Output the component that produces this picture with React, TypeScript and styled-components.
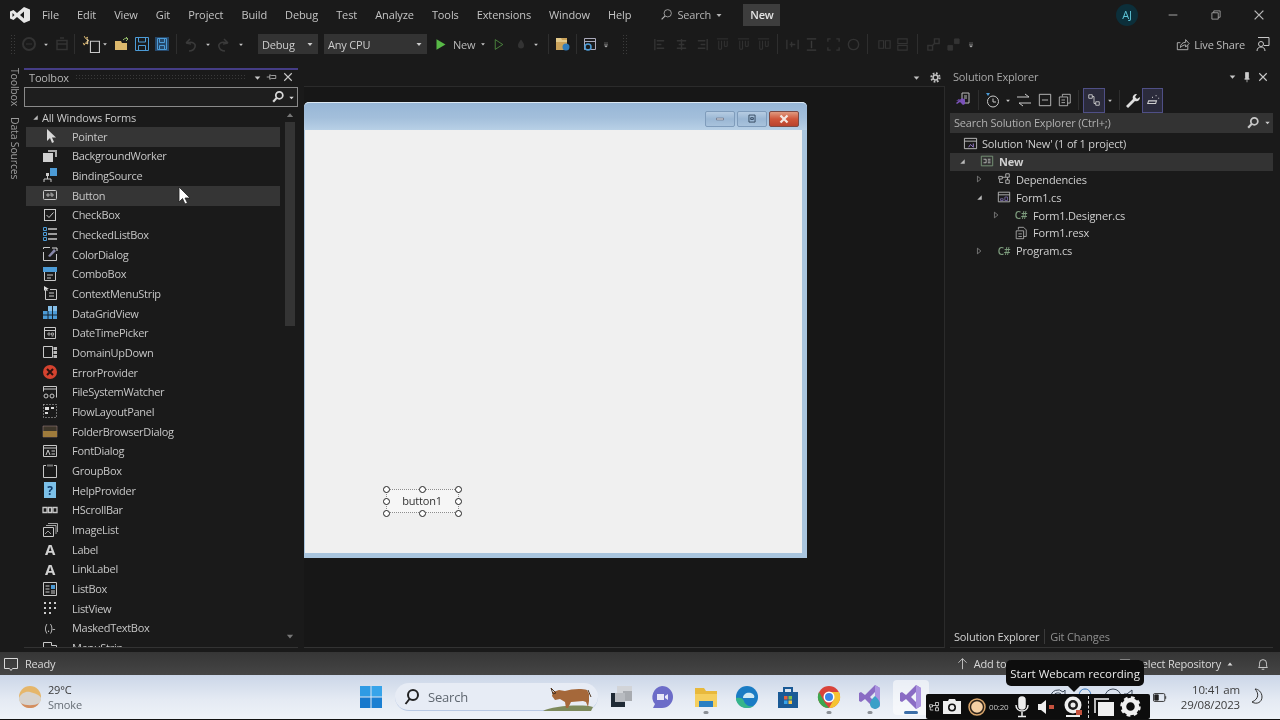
import React from 'react'
import styled, { createGlobalStyle } from 'styled-components'

const GlobalStyle = createGlobalStyle`
  html, body {
    margin: 0;
    padding: 0;
    width: 1280px;
    height: 720px;
    overflow: hidden;
    background: #1a1a1a;
  }
  * {
    box-sizing: border-box;
  }
`

const Page = styled.div`
  position: relative;
  width: 1280px;
  height: 720px;
  overflow: hidden;
  display: flex;
  flex-direction: column;
  background: #1a1a1a;
  color: #cfcfcf;
  font-family: 'Open Sans', 'Noto Sans', sans-serif;
  font-size: 11px;
  letter-spacing: -0.18px;
  filter: blur(0.4px);
`

/* ---- title + menu ---- */

const MenuBar = styled.div`
  height: 30px;
  flex: none;
  display: flex;
  align-items: center;
  padding: 0 0 1px 10px;
`

const MenuItems = styled.div`
  display: flex;
  gap: 18px;
  margin-left: 12px;
  margin-right: 29px;
`

const MenuItem = styled.span`
  color: #c4c4c4;
  font-size: 11px;
  letter-spacing: -0.1px;
`

const MenuSearch = styled.div`
  display: flex;
  align-items: center;
  gap: 4px;
  width: 83px;
  color: #b4b4b4;
`

const SolutionTag = styled.div`
  width: 37px;
  height: 22px;
  display: flex;
  align-items: center;
  justify-content: center;
  background: #3d3d3d;
  color: #e4e4e4;
  font-weight: 600;
`

const Avatar = styled.div`
  margin-left: auto;
  width: 22px;
  height: 22px;
  border-radius: 50%;
  display: flex;
  align-items: center;
  justify-content: center;
  background: #0c2f3a;
  color: #5fc6d8;
  font-size: 11px;
  margin-right: 13px;
`

const WinButton = styled.div`
  width: 43px;
  display: flex;
  justify-content: center;
  color: #b8b8b8;
`

/* ---- main toolbar ---- */

const ToolBar = styled.div`
  height: 28px;
  flex: none;
  display: flex;
  align-items: center;
`

const Tool = styled.span<{ $w: number; $ml: number }>`
  flex: none;
  width: ${p => p.$w}px;
  margin-left: ${p => p.$ml}px;
  display: flex;
  align-items: center;
  justify-content: center;
  color: #c8c8c8;
`

const Grip = styled.span<{ $w: number; $ml: number }>`
  flex: none;
  width: ${p => p.$w}px;
  height: 20px;
  margin-left: ${p => p.$ml}px;
  background-image: radial-gradient(#3c3c3c 0.8px, transparent 0.8px);
  background-size: 3px 3px;
`

const Sep = styled.span<{ $ml: number }>`
  flex: none;
  width: 1px;
  height: 20px;
  margin-left: ${p => p.$ml}px;
  background: #2e2e2e;
`

const Combo = styled.div<{ $w: number; $ml: number }>`
  flex: none;
  width: ${p => p.$w}px;
  height: 20px;
  margin-left: ${p => p.$ml}px;
  padding: 0 4px;
  display: flex;
  align-items: center;
  justify-content: space-between;
  background: #333333;
  color: #cdcdcd;
`

const ToolLabel = styled.span<{ $ml: number }>`
  flex: none;
  margin-left: ${p => p.$ml}px;
  color: #b9b9b9;
`

const LiveShare = styled.div`
  margin-left: auto;
  margin-right: 9px;
  display: flex;
  align-items: center;
  gap: 4px;
  color: #bdbdbd;
`

/* ---- workspace ---- */

const Workspace = styled.div`
  flex: 1;
  min-height: 0;
  display: flex;
  padding: 10px 7px 4px 0;
`

const Rail = styled.div`
  width: 24px;
  flex: none;
  display: flex;
  flex-direction: column;
  align-items: center;
  gap: 11px;
  padding-left: 5px;
`

const RailTab = styled.span`
  writing-mode: vertical-rl;
  color: #9c9c9c;
  font-size: 10.5px;
  line-height: 12px;
`

const ToolboxPanel = styled.section`
  width: 274px;
  flex: none;
  display: flex;
  flex-direction: column;
  border-top: 2px solid #453d86;
`

const PanelHead = styled.div`
  height: 17px;
  flex: none;
  display: flex;
  align-items: center;
  padding: 0 4px 3px 5px;
  gap: 6px;
  color: #b5b5b5;
`

const HeadDots = styled.span`
  flex: 1;
  height: 7px;
  background-image: radial-gradient(#3a3a3a 0.8px, transparent 0.8px);
  background-size: 3px 3px;
`

const HeadActions = styled.span`
  display: flex;
  align-items: center;
  gap: 4px;
  color: #c8c8c8;
`

const ToolboxSearch = styled.div`
  height: 20px;
  flex: none;
  display: flex;
  align-items: center;
  justify-content: flex-end;
  gap: 3px;
  padding-right: 2px;
  border: 1px solid #8a8a8a;
  background: #1e1e1e;
  color: #d8d8d8;
`

const ToolboxBody = styled.div`
  flex: 1;
  min-height: 0;
  display: flex;
  border-bottom: 1px solid #333;
`

const ToolList = styled.div`
  width: 256px;
  flex: none;
  padding-left: 2px;
  overflow: hidden;
`

const GroupRow = styled.div`
  height: 20px;
  display: flex;
  align-items: center;
  gap: 2px;
  padding-left: 5px;
  color: #c8c8c8;
`

const ToolRow = styled.div<{ $hot?: boolean }>`
  position: relative;
  height: 19.68px;
  display: flex;
  align-items: center;
  padding: 0 0 1.5px 16px;
  gap: 14px;
  color: #c6c6c6;
  letter-spacing: -0.3px;
  background: ${p => (p.$hot ? '#353535' : 'transparent')};
`

const ToolIcon = styled.span`
  width: 16px;
  height: 16px;
  display: flex;
  align-items: center;
  justify-content: center;
  color: #c8c8c8;
`

const LabelMark = styled.span`
  color: #d0d0d0;
  font-size: 15px;
  font-weight: 700;
  line-height: 16px;
`

const Cursor = styled.svg`
  position: absolute;
  left: 152px;
  top: 0;
`

const ScrollBar = styled.div`
  width: 12px;
  flex: none;
  margin-left: 4px;
  display: flex;
  flex-direction: column;
  align-items: center;
  color: #777;
`

const ScrollArrow = styled.div<{ $bottom?: boolean }>`
  height: 15px;
  flex: none;
  display: flex;
  align-items: center;
  justify-content: center;
  margin-top: ${p => (p.$bottom ? 'auto' : '0')};
  margin-bottom: ${p => (p.$bottom ? '4px' : '0')};
`

const ScrollThumb = styled.div`
  width: 10px;
  height: 204px;
  flex: none;
  background: #343434;
`

/* ---- designer ---- */

const Designer = styled.main`
  flex: 1;
  min-width: 0;
  margin: 0 5px 0 2px;
  display: flex;
  flex-direction: column;
`

const DocStrip = styled.div`
  height: 18px;
  flex: none;
  display: flex;
  align-items: center;
  justify-content: flex-end;
  gap: 9px;
  padding-right: 4px;
  color: #c0c0c0;
`

const DocWell = styled.div`
  flex: 1;
  margin-left: 4px;
  padding-top: 15px;
  border-top: 1px solid #2b2b2b;
  border-right: 1px solid #2b2b2b;
  border-bottom: 1px solid #333;
  background: #171717;
`

const FormWindow = styled.div`
  width: 503px;
  height: 456px;
  display: flex;
  flex-direction: column;
  border-radius: 5px 5px 0 0;
  background: #a9c5de;
  padding: 0 5px 5px 1px;
`

const FormTitle = styled.div`
  height: 28px;
  flex: none;
  margin: 0 -5px 0 -1px;
  padding: 8px 8px 0 0;
  display: flex;
  justify-content: flex-end;
  gap: 2px;
  border-radius: 5px 5px 0 0;
  border-top: 1px solid #dce8f2;
  background: linear-gradient(180deg, #97b6d6 0%, #a3bfdb 55%, #b8d0e6 100%);
`

const CaptionButton = styled.div<{ $close?: boolean }>`
  width: 30px;
  height: 16px;
  display: flex;
  align-items: center;
  justify-content: center;
  border-radius: 2px;
  border: 1px solid ${p => (p.$close ? '#7c4a45' : '#7f9cbb')};
  background: ${p =>
    p.$close
      ? 'linear-gradient(180deg, #e09a80 0%, #d0563a 50%, #b9432e 100%)'
      : 'linear-gradient(180deg, #b6cce2 0%, #9ab7d4 50%, #a8c2dc 100%)'};
`

const FormBody = styled.div`
  position: relative;
  flex: 1;
  background: #f0f0f0;
`

const FormButton = styled.div`
  position: absolute;
  left: 81px;
  top: 359px;
  width: 73px;
  height: 24px;
  display: flex;
  align-items: center;
  justify-content: center;
  padding: 0 1px 1px 0;
  background: #f6f6f6;
  border: 1px dotted #8c8c8c;
  color: #333;
`

const Handle = styled.span<{ $x: number; $y: number }>`
  position: absolute;
  left: ${p => p.$x}px;
  top: ${p => p.$y}px;
  width: 7px;
  height: 7px;
  border: 1px solid #222;
  border-radius: 50%;
  background: #fff;
`

/* ---- solution explorer ---- */

const SolutionPanel = styled.aside`
  width: 323px;
  flex: none;
  display: flex;
  flex-direction: column;
`

const SolutionHead = styled.div`
  height: 19px;
  flex: none;
  display: flex;
  align-items: center;
  justify-content: space-between;
  padding: 0 4px 2px 3px;
  color: #a8a8a8;
`

const SolutionTools = styled.div`
  height: 26px;
  flex: none;
  display: flex;
  align-items: center;
`

const BoxedTool = styled.span<{ $w: number; $ml: number }>`
  flex: none;
  width: ${p => p.$w}px;
  height: 25px;
  margin-left: ${p => p.$ml}px;
  display: flex;
  align-items: center;
  justify-content: center;
  background: #2b2b3c;
  border: 1px solid #4f4f86;
`

const SolutionSearch = styled.div`
  height: 20px;
  flex: none;
  display: flex;
  align-items: center;
  justify-content: space-between;
  padding: 0 2px 1px 4px;
  background: #333;
  color: #b0b0b0;
`

const Tree = styled.div`
  flex: 1;
  padding-top: 2px;
`

const TreeRow = styled.div<{ $pad: number; $hot?: boolean }>`
  height: 17.9px;
  display: flex;
  align-items: center;
  padding: 0 0 1px ${p => p.$pad}px;
  background: ${p => (p.$hot ? '#333' : 'transparent')};
  color: #cfcfcf;
  font-weight: ${p => (p.$hot ? 700 : 400)};
`

const TreeArrow = styled.span`
  width: 16px;
  margin-right: 9px;
  flex: none;
  display: flex;
  justify-content: center;
  color: #a5a5a5;
`

const TreeIcon = styled.span`
  width: 16px;
  margin-right: 4px;
  flex: none;
  display: flex;
  justify-content: center;
  color: #bdbdbd;
`

const CsMark = styled.span`
  color: #7d9c7d;
  font-size: 10px;
  font-weight: 600;
`

const BottomTabs = styled.div`
  height: 20px;
  flex: none;
  display: flex;
  align-items: center;
  gap: 5px;
  padding: 0 0 2px 4px;
  border-bottom: 1px solid #333;
`

const BottomTab = styled.span<{ $on?: boolean }>`
  padding-right: ${p => (p.$on ? '5px' : '0')};
  border-right: ${p => (p.$on ? '1px solid #3a3a3a' : 'none')};
  color: ${p => (p.$on ? '#d0d0d0' : '#8f8f8f')};
`

/* ---- status bar ---- */

const StatusBar = styled.footer`
  height: 23px;
  flex: none;
  display: flex;
  align-items: center;
  padding: 0 10px 0 3px;
  background: linear-gradient(180deg, #363636, #454545);
  color: #d8d8d8;
`

const StatusRight = styled.div`
  margin-left: auto;
  display: flex;
  align-items: center;
`

const StatusItem = styled.span<{ $ml: number }>`
  display: flex;
  align-items: center;
  gap: 5px;
  margin-left: ${p => p.$ml}px;
  white-space: nowrap;
`

/* ---- windows taskbar ---- */

const Taskbar = styled.div`
  height: 45px;
  flex: none;
  display: flex;
  align-items: center;
  padding: 0 17px 0 18px;
  border-bottom: 1px solid #111;
  background: linear-gradient(180deg, #cbd6e8 0%, #e4eaf3 55%, #eef2f8 100%);
  color: #333;
`

const Weather = styled.div`
  width: 332px;
  flex: none;
  display: flex;
  align-items: center;
  gap: 6px;
`

const WeatherText = styled.div`
  display: flex;
  flex-direction: column;
  font-size: 11px;
  line-height: 15px;
  color: #3a3a3a;
  & > span + span {
    color: #666d75;
  }
`

const TaskSlot = styled.div<{ $run?: 'dot' | 'active'; $ml?: number }>`
  position: relative;
  width: ${p => (p.$run === 'active' ? 36 : 41)}px;
  height: 35px;
  flex: none;
  margin-left: ${p => p.$ml ?? 0}px;
  display: flex;
  align-items: center;
  justify-content: center;
  background: ${p => (p.$run === 'active' ? 'rgba(255,255,255,0.55)' : 'transparent')};
  border-radius: 4px;
  &::after {
    content: '';
    display: ${p => (p.$run ? 'block' : 'none')};
    position: absolute;
    bottom: 1px;
    left: 50%;
    transform: translateX(-50%);
    width: ${p => (p.$run === 'active' ? '14px' : '5px')};
    height: 3px;
    border-radius: 2px;
    background: ${p => (p.$run === 'active' ? '#3b6ea8' : '#8b8f96')};
  }
`

const TaskSearch = styled.div`
  position: relative;
  width: 203px;
  height: 28px;
  flex: none;
  margin: 0 2px 0 4px;
  display: flex;
  align-items: center;
  gap: 7px;
  padding-left: 8px;
  border-radius: 14px;
  background: #e7ecf5;
  border-bottom: 1px solid #b9c9e4;
  color: #5f6770;
  font-size: 13px;
`

const Bull = styled.svg`
  position: absolute;
  right: 3px;
  top: 1px;
`

const Tray = styled.div`
  margin-left: auto;
  display: flex;
  align-items: center;
`

const TrayPeek = styled.svg<{ $ml: number }>`
  flex: none;
  margin-left: ${p => p.$ml}px;
  color: #3a4656;
`

const TrayIcon = styled.svg<{ $ml: number }>`
  flex: none;
  margin-left: ${p => p.$ml}px;
`

const Clock = styled.div`
  margin-left: 14px;
  display: flex;
  flex-direction: column;
  align-items: flex-end;
  font-size: 11.5px;
  line-height: 15px;
  color: #3d3d3d;
`

/* ---- screen recorder overlay ---- */

const Recorder = styled.div`
  position: absolute;
  left: 926px;
  top: 694px;
  width: 224px;
  height: 25px;
  display: flex;
  align-items: center;
  background: #0d0d0d;
  border-radius: 2px;
  color: #eee;
`

const RecSlot = styled.span<{ $w: number; $ml: number }>`
  flex: none;
  width: ${p => p.$w}px;
  margin-left: ${p => p.$ml}px;
  display: flex;
  align-items: center;
  justify-content: center;
`

const RecTime = styled.span`
  flex: none;
  margin-left: 3px;
  font-size: 8px;
  color: #c8c8c8;
`

const RecDivider = styled.span`
  flex: none;
  height: 22px;
  margin-left: 5px;
  border-left: 1px dashed #ddd;
`

const Tooltip = styled.div`
  position: absolute;
  left: 1006px;
  top: 660px;
  width: 138px;
  height: 26px;
  display: flex;
  align-items: center;
  justify-content: center;
  background: #0d0d0d;
  border-radius: 5px;
  color: #eaeaea;
  font-size: 11.5px;
  letter-spacing: 0;
  &::after {
    content: '';
    position: absolute;
    left: 61px;
    top: 25px;
    border-left: 7px solid transparent;
    border-right: 7px solid transparent;
    border-top: 7px solid #0d0d0d;
  }
`

/* ---- drawings ---- */

const blue = '#4c9bd6'

const art: Record<string, React.ReactNode> = {
  pointer: <path d="M5 1v12l3-3 2 5 2-1-2-4.500h4z" fill="#d8d8d8" stroke="none" />,
  worker: (
    <>
      <path d="M6 2h9v7h-2V4H6z" fill="#aaa" stroke="none" />
      <path d="M1 5h10v9H1z" fill="#d0d0d0" stroke="none" />
    </>
  ),
  binding: (
    <>
      <path d="M8 1h7v8H8z" fill={blue} stroke="none" />
      <path d="M2 15v-3h7v3M5.500 12V8" />
      <path d="M4 6h3v3H4z" fill="#ccc" stroke="none" />
    </>
  ),
  button: (
    <>
      <rect x="1.500" y="3.500" width="13" height="9" rx="1" />
      <path d="M5 7h2v2H5zM9 5.500V9h2V7H9" strokeWidth=".8" />
    </>
  ),
  checkbox: (
    <>
      <rect x="2.500" y="2.500" width="11" height="11" />
      <path d="M4.500 8l2.500 2.500 4.500-5" />
    </>
  ),
  checkedlist: (
    <>
      <path d="M1.500 1.500h3v3h-3zM1.500 6.500h3v3h-3zM1.500 11.500h3v3h-3z" stroke={blue} />
      <path d="M6 3h9M6 8h9M6 13h9" strokeWidth="1.500" />
    </>
  ),
  color: (
    <>
      <path d="M1.500 6v8.500h13V8M1.500 3V1.500H8" />
      <path d="M6 10l6-7 2 2-6 6z" fill="#88a" stroke="none" />
      <path d="M10 2h5v3" stroke="#ddd" />
    </>
  ),
  combo: (
    <>
      <path d="M1 1h14v5H1z" fill={blue} stroke="none" />
      <path d="M2.500 6v8.500h11V6M5 9h6M5 12h4" />
    </>
  ),
  context: (
    <>
      <path d="M3.500 5v9.500h11V4.500H8M7 8h5M7 11h5" />
      <path d="M2 1v5l1.500-1.500L5 6l1-1-1.500-1H7z" fill="#ddd" stroke="none" />
    </>
  ),
  grid: (
    <>
      <path d="M1 6h14v8H1z" fill={blue} stroke="none" />
      <path d="M6 1h9v5H6z" fill="#86bfe8" stroke="none" />
      <path d="M1 10h14M6 6v8M10.500 1v13" stroke="#16222c" />
    </>
  ),
  date: (
    <>
      <path d="M2.500 2.500h11v11h-11zM2.500 5.500h11" />
      <path d="M6 8h2v2H6zM9.500 8h2v2h-2zM9.500 11h2" stroke="#bbb" strokeWidth=".8" />
    </>
  ),
  domain: (
    <>
      <path d="M1.500 2.500h9v11h-9z" />
      <path d="M11.500 3h3.500v3h-3.500zM11.500 7h3.500v3h-3.500zM11.500 11h3.500v3h-3.500z" fill="#bbb" stroke="none" />
    </>
  ),
  error: (
    <>
      <circle cx="8" cy="8" r="7" fill="#d5432f" stroke="none" />
      <path d="M5 5l6 6M11 5l-6 6" stroke="#2a1210" strokeWidth="2" />
    </>
  ),
  watcher: (
    <>
      <path d="M1.500 2.500h13v11M1.500 2.500v5M1.500 5h13" />
      <circle cx="4" cy="12" r="2" />
      <circle cx="10" cy="12" r="2" />
    </>
  ),
  flow: (
    <>
      <path d="M1.500 1.500h13v13h-13z" strokeDasharray="1 2" />
      <path d="M3 4h4v3H3zM9 4h3v2H9zM3 9h3v2H3z" fill="#ddd" stroke="none" />
    </>
  ),
  folder: (
    <>
      <path d="M1 3h14v11H1z" fill="#3d362a" stroke="#a88" strokeWidth=".5" />
      <path d="M1 8h14v6H1z" fill="#a07c3c" stroke="none" />
    </>
  ),
  font: (
    <>
      <path d="M1.500 2.500h13v11h-13zM1.500 5h13" />
      <path d="M4 12l2-5 2 5M9.500 8H13M9.500 11H13" />
    </>
  ),
  group: <path d="M4 2.500H1.500v12h13v-12H12M6 1.500v2M8 1.500v2M10 1.500v2" />,
  help: (
    <>
      <path d="M2 0h12v16H2z" fill="#7cc0e8" stroke="none" />
      <text x="8" y="12.500" textAnchor="middle" fontSize="12" fontWeight="700" fill="#0e3c6c" stroke="none" fontFamily="Open Sans">
        ?
      </text>
    </>
  ),
  hscroll: <path d="M1 5.500h4v5H1zM6.500 5.500h3v5h-3zM11 5.500h4v5h-4z" strokeWidth="1.300" />,
  images: (
    <>
      <path d="M1.500 5.500h10v9h-10z" />
      <path d="M4 3.500h10V12M6 1.500h9.500V10" strokeWidth=".8" />
      <path d="M3 12l3-3 3 3" strokeWidth=".8" />
    </>
  ),
  listbox: (
    <>
      <path d="M1.500 1.500h13v13h-13z" />
      <path d="M3.500 5h4M3.500 8h4M3.500 11h4" />
      <path d="M9 4h4v4H9z" fill={blue} stroke="none" />
      <path d="M9 10h4M9 12h4" />
    </>
  ),
  listview: (
    <path
      d="M2 2h2v2H2zM7 2h2v2H7zM12 2h2v2h-2zM2 7h2v2H2zM7 7h2v2H7zM12 7h2v2h-2zM2 12h2v2H2zM7 12h2v2H7z"
      fill="#ccc"
      stroke="none"
    />
  ),
  masked: (
    <text x="8" y="12" textAnchor="middle" fontSize="10" fill="#ccc" stroke="none" fontFamily="Open Sans">
      (.)-
    </text>
  ),
  menustrip: <path d="M1.500 2.500h8v3h5v9h-13z" />,
  caret: <path d="M3 6h10l-5 6z" fill="currentColor" stroke="none" />,
  search: (
    <>
      <circle cx="9.500" cy="6" r="4" strokeWidth="2" />
      <path d="M6.500 9L2.500 13.500" strokeWidth="2.400" />
    </>
  ),
  thinSearch: (
    <>
      <circle cx="9.500" cy="6.500" r="4.500" />
      <path d="M6 10L2 14" strokeWidth="1.500" />
    </>
  ),
  close: <path d="M3 3l10 10M13 3L3 13" strokeWidth="1.500" />,
  pinSide: <path d="M1 8h4M5 5v6l2-1h6V6H7z" />,
  pinDown: <path d="M8 15v-4M5 11h6l-1-2V2H6v7z" fill="#ccc" />,
  gear: (
    <>
      <circle cx="8" cy="8" r="6" strokeWidth="3" strokeDasharray="2.500 2.200" />
      <circle cx="8" cy="8" r="3.500" strokeWidth="2.200" />
    </>
  ),
  minimize: <path d="M3 8h10" />,
  restore: <path d="M5 5V2.500h8.500V11H11M2.500 5H11v8.500H2.500z" />,
  triDown: <path d="M12 4v8H4z" fill="#bbb" stroke="none" />,
  triRight: <path d="M5.500 3.500l5.500 4.500-5.500 4.500z" />,
  newProject: (
    <>
      <path d="M7.500 5.500h8v10h-8zM5 8V3.500" />
      <path d="M2 1l1 2 2-1-1 2 2 1-2 1 1 2-2-1-1 2-1-2" stroke="#e8c37a" strokeWidth=".8" />
    </>
  ),
  openFolder: (
    <>
      <path d="M1 5h6l1 2h5v7H1z" fill="#dcb86c" stroke="none" />
      <path d="M9 4c2-2 3-2 5-1M12 1l2 2-2 2" stroke="#9ac46e" />
    </>
  ),
  save: (
    <>
      <path d="M1.500 1.500h13v13h-13z" stroke={blue} />
      <path d="M4.500 2v4h7V2M4.500 14V9.500h7V14" stroke={blue} />
    </>
  ),
  saveAll: (
    <>
      <path d="M1 1h14v14H1z" fill="#26486a" stroke="none" />
      <path d="M3.500 2.500h9v11h-9zM5.500 3v3.500h5V3M5.500 13v-3.500h5V13" stroke={blue} />
    </>
  ),
  undo: <path d="M3 7l4-4M3 7l5 1M4 7c6-2 9 1 8 4s-4 4-6 4" stroke="#3a3a3a" strokeWidth="1.500" />,
  redo: <path d="M13 7L9 3M13 7L8 8M12 7C6 5 3 8 4 11s4 4 6 4" stroke="#3a3a3a" strokeWidth="1.500" />,
  disabledA: (
    <>
      <circle cx="8" cy="8" r="6" stroke="#333" strokeWidth="2" />
      <path d="M5 8h6" stroke="#333" />
    </>
  ),
  disabledB: <path d="M3 4.500h10v9H3zM3 8h10M6 2h4" stroke="#333" strokeWidth="1.500" />,
  play: <path d="M2 1l12 7-12 7z" fill="#58b947" stroke="none" />,
  playLine: <path d="M3 1.500l10 6.500-10 6.500z" stroke="#58a047" />,
  flame: <path d="M8 2c3 4 4 6 4 8a4 4 0 0 1-8 0c0-2 1-4 4-8z" fill="#333" stroke="none" />,
  browse: (
    <>
      <path d="M1 2h11v12H1z" fill="#caa25a" stroke="none" />
      <path d="M1 2h5l1 2h5v2H1z" fill="#e2c98b" stroke="none" />
      <circle cx="11" cy="11" r="3.500" fill="#2f7dbd" stroke="none" />
    </>
  ),
  windowCog: (
    <>
      <path d="M2.500 2.500h11v11h-11zM2.500 5.500h11" stroke="#aab" />
      <circle cx="6" cy="11" r="3" stroke={blue} strokeWidth="1.500" />
    </>
  ),
  overflow: <path d="M4 5h8M4 8h8M5 10.500h6l-3 3z" fill="#bbb" stroke="#bbb" strokeWidth=".8" />,
  alignL: <path d="M3 2v12M5 4h8M5 8h5M5 12h8" stroke="#333" strokeWidth="1.500" />,
  alignC: <path d="M8 2v12M3 4h10M5 8h6M3 12h10" stroke="#333" strokeWidth="1.500" />,
  alignR: <path d="M13 2v12M3 4h8M6 8h5M3 12h8" stroke="#333" strokeWidth="1.500" />,
  alignT: <path d="M2 2h12M4 4v9h3V4M10 4v6h3V4" stroke="#333" />,
  spaceH: <path d="M2 3v10M14 3v10M5 8h6M7 5v6" stroke="#333" strokeWidth="1.500" />,
  spaceV: <path d="M3 2h10M3 14h10M8 4v8" stroke="#3a3a3a" strokeWidth="1.500" />,
  corners: <path d="M2 5V2h3M11 2h3v3M14 11v3h-3M5 14H2v-3" stroke="#333" strokeWidth="1.500" />,
  round: <circle cx="8" cy="8" r="5.500" stroke="#333" strokeWidth="1.500" />,
  twin: <path d="M2 4h5v8H2zM9 4h5v8H9z" stroke="#333" strokeWidth="1.200" />,
  stack: <path d="M3 2h10v5H3zM3 9h10v5H3z" stroke="#333" strokeWidth="1.200" />,
  order: <path d="M2 9h5v5H2zM9 2h5v5H9zM7 9l2-2" stroke="#333" strokeWidth="1.500" />,
  order2: <path d="M2 9h5v5H2zM9 2h5v5H9z" fill="#333" stroke="#333" />,
  liveShare: (
    <>
      <path d="M13.500 9.500v5h-12v-8H5" />
      <path d="M5 12c0-4 3-6 6-6V3l4 4.500-4 4V9c-2 0-4 1-6 3z" />
    </>
  ),
  feedback: (
    <>
      <path d="M3 1.500h11v8H9" />
      <circle cx="6" cy="8" r="2.500" />
      <path d="M2 15c0-3 2-4 4-4s4 1 4 4" />
    </>
  ),
  vsFile: (
    <>
      <path d="M7 1h7v10H7z" stroke="#bbb" />
      <path d="M9 4h3M9 6h3" stroke="#bbb" />
      <path d="M1 9l3-2 5 4V7l-2-1-6 5 1 1 3-2 3 3 2-1V7" fill="#7a52b8" stroke="none" />
    </>
  ),
  clock: (
    <>
      <circle cx="9" cy="9.500" r="5.500" />
      <path d="M9 6.500v3.500h3" />
      <path d="M2 1h4L4 4z" fill={blue} stroke="none" />
    </>
  ),
  swap: <path d="M1 5h12M9 2l4 3M3 11h12M7 14l-4-3" />,
  collapse: <path d="M1.500 1.500h13v13h-13zM4.500 8h7" />,
  copyDoc: <path d="M5 4V1.500h9v10h-3M1.500 4.500H11v10H1.500zM4 8h4M4 11h4" strokeWidth=".9" />,
  hierarchy: <path d="M2 2h4v4H2zM10 10h4v4h-4zM6 4h2v8h2" fill="none" />,
  wrench: <path d="M2 14l7-7c-1-3 1-5 4-5l-2 3 2 2 3-2c0 3-2 5-5 4l-7 7z" fill="#ddd" stroke="none" />,
  properties: <path d="M2 12h9l1-3H3zM7 5h1M11 3h1M14 6h1" strokeWidth="1.200" />,
  solution: (
    <>
      <path d="M1.500 2.500h13v11h-13zM1.500 5.500h13" />
      <path d="M6 12l2-3 3 3V8" stroke="#9a7fd0" />
    </>
  ),
  csProj: (
    <>
      <path d="M1.500 2.500h13v11h-13z" stroke="#7d9c7d" />
      <path d="M4 6h3v4H4M9 6h3M9 8h3M9 10h3" stroke="#cfcfcf" strokeWidth=".9" />
    </>
  ),
  deps: <path d="M2 5h4v3H2zM10 2h4v4h-4zM10 9h4v4h-4zM3 8v4h4M6 6h4M12 6v3" strokeWidth="1" />,
  formFile: (
    <>
      <path d="M1.500 2.500h13v11h-13zM1.500 5.500h13" />
      <path d="M4 10h3v2H4zM9 8h3v4H9z" stroke="#8a7ac0" strokeWidth=".8" />
    </>
  ),
  resx: <path d="M5 4V1.500h6l3 3V12h-3M2.500 5.500h8.500v9H2.500zM5 9h4M5 12h4" strokeWidth=".9" />,
  comment: <path d="M1.500 2.500h13v10H9.500L8 14.500 6.500 12.500h-5z" />,
  upArrow: <path d="M8 15V2M3 7l5-5 5 5" />,
  triUp: <path d="M3 11h10L8 5z" fill="currentColor" stroke="none" />,
  repo: <path d="M1.500 2.500h13v11h-13z" />,
  bell: <path d="M3 12c1-1 1-2 1-5a4 4 0 0 1 8 0c0 3 0 4 1 5zM6.500 14h3" />,
  minimizeCap: <path d="M4 7h8v2H4z" fill="#e8eef4" stroke="#556" strokeWidth=".7" />,
  maximizeCap: <path d="M4.500 3.500h7v8h-7zM6.500 6.500h3v2h-3z" stroke="#2d4157" />,
  closeCap: <path d="M4 4l8 8M12 4l-8 8" stroke="#f4e7e2" strokeWidth="2.600" />
}

const Ico = ({ n, s = 16 }: { n: string; s?: number }) => (
  <svg width={s} height={s} viewBox="0 0 16 16" fill="none" stroke="currentColor" strokeWidth="1">
    {art[n]}
  </svg>
)

const Sun = () => (
  <svg width="24" height="26" viewBox="0 0 24 26">
    <circle cx="12" cy="13" r="11" fill="#e5b66a" />
    <path d="M1 14c2-5 7-7 11-6s10 3 11 6c0 6-5 9-11 9S1 20 1 14z" fill="#d7d3ce" />
    <path d="M3 19c4 3 14 3 18 0-2 4-6 5-9 5s-7-1-9-5z" fill="#d38d5f" />
  </svg>
)

const StartLogo = () => (
  <svg width="22" height="22" viewBox="0 0 22 22">
    <path d="M0 0h10.500v10.500H0z" fill="#2f9be4" />
    <path d="M11.500 0H22v10.500H11.500z" fill="#37a4ea" />
    <path d="M0 11.500h10.500V22H0z" fill="#1778cc" />
    <path d="M11.500 11.500H22V22H11.500z" fill="#1a7fd2" />
  </svg>
)

const BullArt = () => (
  <Bull width="52" height="27" viewBox="0 0 52 27">
    <path d="M0 27c8-5 40-7 50-4l-2 4z" fill="#7d8a5c" />
    <path d="M10 8l6-2 6 1c6-2 16-3 22-1l2 4v7l-1 6-2-5-3-1-12 1-3 6h-2l-1-6-5-3-5 1-3-4z" fill="#a5683a" />
    <path d="M8 4l5 5-3 1zM45 6l3 7" stroke="#4d3520" fill="none" />
  </Bull>
)

const TaskView = () => (
  <svg width="24" height="24" viewBox="0 0 24 24">
    <path d="M8 1h15v15H8z" fill="#d2d4d8" />
    <path d="M14 6h9v10h-9z" fill="#a8abb0" />
    <path d="M2 8h14v14H2z" fill="#1f2a35" />
    <path d="M6 8h10v9H6z" fill="#b8bbc0" />
  </svg>
)

const Meet = () => (
  <svg width="24" height="24" viewBox="0 0 24 24">
    <path d="M12 1a11 11 0 0 1 0 22H3l2-4A11 11 0 0 1 12 1z" fill="#6c6cc8" />
    <path d="M7 9h7v6H7zM15 11l3-2v6l-3-2z" fill="#e8e8f8" />
  </svg>
)

const Explorer = () => (
  <svg width="24" height="24" viewBox="0 0 24 24">
    <path d="M1 3h9l2 3h11v16H1z" fill="#e8b93c" />
    <path d="M1 9h22v13H1z" fill="#f5cf5e" />
    <path d="M5 16h14v6H5z" fill="#2a7fc2" />
  </svg>
)

const Edge = () => (
  <svg width="24" height="24" viewBox="0 0 24 24">
    <circle cx="12" cy="12" r="11" fill="#1a7cc4" />
    <path d="M1 13c0 6 5 10 11 10 3 0 5-1 7-2-5 1-9-1-10-5-1-3-4-4-8-3z" fill="#36b58a" />
    <path d="M8 13c0-4 4-6 8-5 3 1 4 3 3 5h-8c-1 0-3 0-3 0z" fill="#cfeaf5" />
  </svg>
)

const Store = () => (
  <svg width="24" height="24" viewBox="0 0 24 24">
    <path d="M2 7h20v16H2z" fill="#1a5a96" />
    <path d="M8 7V3h8v4" stroke="#1a5a96" strokeWidth="2" fill="none" />
    <path d="M8 11h3.500v3.500H8z" fill="#e8603c" />
    <path d="M12.500 11H16v3.500h-3.500z" fill="#7cc24a" />
    <path d="M8 15.500h3.500V19H8z" fill="#38a3e8" />
    <path d="M12.500 15.500H16V19h-3.500z" fill="#f5c242" />
  </svg>
)

const Chrome = () => (
  <svg width="24" height="24" viewBox="0 0 24 24">
    <circle cx="12" cy="12" r="11" fill="#d9433a" />
    <path d="M2 7l6 11 4 5A11 11 0 0 1 2 7z" fill="#3da84f" />
    <path d="M12 7h10a11 11 0 0 1-10 16l5-9z" fill="#f5c332" />
    <circle cx="12" cy="12" r="5.500" fill="#fff" />
    <circle cx="12" cy="12" r="4" fill="#3a84e8" />
  </svg>
)

const VsLogo = ({ drop }: { drop?: boolean }) => (
  <svg width="24" height="26" viewBox="0 0 24 26">
    <path d="M17 1l5 3v18l-5 3L7 15l-4 3-2-1V9l2-1 4 3zM17 8l-5 5 5 5z" fill="#8a6cc4" fillRule="evenodd" />
    <path d="M17 1l5 3v18l-5 3z" fill="#ab93e0" />
    {drop && <path d="M17 12c3 3 5 5 5 8a5 5 0 0 1-10 0c0-3 2-5 5-8z" fill="#3aa0c8" />}
  </svg>
)

const CursorArrow = () => (
  <Cursor width="13" height="19" viewBox="0 0 13 19">
    <path d="M1 1v15l3.500-3.500 2.500 5.500 2.500-1-2.500-5h5z" fill="#fff" stroke="#222" strokeWidth=".8" />
  </Cursor>
)

const Camera = () => (
  <svg width="20" height="17" viewBox="0 0 20 17">
    <path d="M1 3h5l1-2h6l1 2h5v13H1z" fill="#eee" />
    <circle cx="10" cy="9.500" r="4" fill="#111" />
    <circle cx="10" cy="9.500" r="2.400" fill="#eee" />
  </svg>
)

const RecDot = () => (
  <svg width="18" height="18" viewBox="0 0 18 18">
    <circle cx="9" cy="9" r="8" fill="#2c2118" stroke="#d9a66c" strokeWidth="1.500" />
    <circle cx="9" cy="9" r="5.800" fill="#f4cfa4" />
  </svg>
)

const Mic = () => (
  <svg width="14" height="22" viewBox="0 0 14 22" fill="none" stroke="#eee" strokeWidth="1.500">
    <rect x="4" y="1" width="6" height="12" rx="3" fill="#eee" />
    <path d="M1 9c0 8 12 8 12 0M7 16v4M3 20.500h8" />
  </svg>
)

const Speaker = () => (
  <svg width="18" height="16" viewBox="0 0 18 16">
    <path d="M1 5h3l5-4v14l-5-4H1z" fill="#eee" />
    <path d="M12 6h5v4h-5z" fill="#c6523e" />
  </svg>
)

const Webcam = () => (
  <svg width="20" height="22" viewBox="0 0 20 22">
    <circle cx="10" cy="9" r="8.500" fill="#eee" />
    <circle cx="10" cy="9" r="5" fill="#1c1c1c" />
    <circle cx="10" cy="9" r="2.500" fill="#eee" />
    <path d="M3 19h14v2H3z" fill="#eee" />
    <path d="M13 14h6v5h-6z" fill="#c6523e" />
  </svg>
)

const WindowsStack = () => (
  <svg width="22" height="20" viewBox="0 0 22 20">
    <path d="M1 1h15v2H3v13H1z" fill="#bbb" />
    <path d="M5 5h16v14H5z" fill="#f0f0f0" />
  </svg>
)

const BigGear = () => (
  <svg width="21" height="21" viewBox="0 0 21 21">
    <circle cx="10.500" cy="10.500" r="6.500" fill="none" stroke="#f0f0f0" strokeWidth="4.500" />
    <circle cx="10.500" cy="10.500" r="8.500" fill="none" stroke="#f0f0f0" strokeWidth="3.500" strokeDasharray="3.500 3.200" />
  </svg>
)

/* ---- data ---- */

const tools: [string, string][] = [
  ['Pointer', 'pointer'],
  ['BackgroundWorker', 'worker'],
  ['BindingSource', 'binding'],
  ['Button', 'button'],
  ['CheckBox', 'checkbox'],
  ['CheckedListBox', 'checkedlist'],
  ['ColorDialog', 'color'],
  ['ComboBox', 'combo'],
  ['ContextMenuStrip', 'context'],
  ['DataGridView', 'grid'],
  ['DateTimePicker', 'date'],
  ['DomainUpDown', 'domain'],
  ['ErrorProvider', 'error'],
  ['FileSystemWatcher', 'watcher'],
  ['FlowLayoutPanel', 'flow'],
  ['FolderBrowserDialog', 'folder'],
  ['FontDialog', 'font'],
  ['GroupBox', 'group'],
  ['HelpProvider', 'help'],
  ['HScrollBar', 'hscroll'],
  ['ImageList', 'images'],
  ['Label', 'label'],
  ['LinkLabel', 'label'],
  ['ListBox', 'listbox'],
  ['ListView', 'listview'],
  ['MaskedTextBox', 'masked'],
  ['MenuStrip', 'menustrip']
]

const menus = ['File', 'Edit', 'View', 'Git', 'Project', 'Build', 'Debug', 'Test', 'Analyze', 'Tools', 'Extensions', 'Window', 'Help']

// layout tools: [icon, left margin], a null icon is a separator
const layoutTools: [string | null, number][] = [
  ['alignL', 22],
  ['alignC', 6],
  ['alignR', 5],
  ['alignT', 4],
  ['alignT', 5],
  ['alignT', 4],
  [null, 6],
  ['spaceH', 6],
  ['spaceV', 3],
  ['corners', 6],
  ['round', 4],
  [null, 6],
  ['twin', 8],
  ['stack', 2],
  [null, 7],
  ['order', 7],
  ['order2', 4]
]

const App = () => {
  return (
    <Page>
      <GlobalStyle />
      <MenuBar>
        <svg width="20" height="16" viewBox="0 0 20 16">
          <path d="M14 0l6 2.500v11L14 16 7 10l-3.500 3L0 11.500v-7L3.500 3 7 6zM14 4.500L10 8l4 3.500zM2.500 6v4l2-2z" fill="#e6e6e6" fillRule="evenodd" />
        </svg>
        <MenuItems>
          {menus.map(m => (
            <MenuItem key={m}>{m}</MenuItem>
          ))}
        </MenuItems>
        <MenuSearch>
          <Ico n="thinSearch" s={13} />
          Search
          <Ico n="caret" s={8} />
        </MenuSearch>
        <SolutionTag>New</SolutionTag>
        <Avatar>AJ</Avatar>
        <WinButton>
          <Ico n="minimize" s={14} />
        </WinButton>
        <WinButton>
          <Ico n="restore" s={12} />
        </WinButton>
        <WinButton>
          <Ico n="close" s={14} />
        </WinButton>
      </MenuBar>

      <ToolBar>
        <Grip $w={7} $ml={10} />
        <Tool $w={16} $ml={4}><Ico n="disabledA" /></Tool>
        <Tool $w={6} $ml={6}><Ico n="caret" s={7} /></Tool>
        <Tool $w={16} $ml={5}><Ico n="disabledB" /></Tool>
        <Sep $ml={4} />
        <Tool $w={18} $ml={7}><Ico n="newProject" s={18} /></Tool>
        <Tool $w={6} $ml={2}><Ico n="caret" s={8} /></Tool>
        <Tool $w={16} $ml={6}><Ico n="openFolder" /></Tool>
        <Tool $w={16} $ml={4}><Ico n="save" /></Tool>
        <Tool $w={16} $ml={4}><Ico n="saveAll" /></Tool>
        <Sep $ml={6} />
        <Tool $w={16} $ml={6}><Ico n="undo" /></Tool>
        <Tool $w={6} $ml={6}><Ico n="caret" s={7} /></Tool>
        <Tool $w={16} $ml={4}><Ico n="redo" /></Tool>
        <Tool $w={6} $ml={7}><Ico n="caret" s={7} /></Tool>
        <Combo $w={60} $ml={14}>
          Debug
          <Ico n="caret" s={8} />
        </Combo>
        <Combo $w={103} $ml={6}>
          Any CPU
          <Ico n="caret" s={8} />
        </Combo>
        <Tool $w={12} $ml={8}><Ico n="play" s={13} /></Tool>
        <ToolLabel $ml={6}>New</ToolLabel>
        <Tool $w={6} $ml={5}><Ico n="caret" s={8} /></Tool>
        <Tool $w={12} $ml={7}><Ico n="playLine" s={13} /></Tool>
        <Tool $w={12} $ml={10}><Ico n="flame" s={14} /></Tool>
        <Tool $w={6} $ml={6}><Ico n="caret" s={7} /></Tool>
        <Sep $ml={9} />
        <Tool $w={16} $ml={6}><Ico n="browse" /></Tool>
        <Sep $ml={5} />
        <Tool $w={16} $ml={5}><Ico n="windowCog" /></Tool>
        <Tool $w={8} $ml={4}><Ico n="overflow" s={9} /></Tool>
        <Grip $w={7} $ml={12} />
        {layoutTools.map(([icon, ml], i) =>
          icon ? (
            <Tool key={i} $w={16} $ml={ml}><Ico n={icon} s={15} /></Tool>
          ) : (
            <Sep key={i} $ml={ml} />
          )
        )}
        <Tool $w={8} $ml={6}><Ico n="overflow" s={9} /></Tool>
        <LiveShare>
          <Ico n="liveShare" s={14} />
          Live Share
          <Tool $w={16} $ml={6}><Ico n="feedback" /></Tool>
        </LiveShare>
      </ToolBar>

      <Workspace>
        <Rail>
          <RailTab>Toolbox</RailTab>
          <RailTab>Data Sources</RailTab>
        </Rail>

        <ToolboxPanel>
          <PanelHead>
            Toolbox
            <HeadDots />
            <HeadActions>
              <Ico n="caret" s={9} />
              <Ico n="pinSide" s={12} />
              <Ico n="close" s={12} />
            </HeadActions>
          </PanelHead>
          <ToolboxSearch>
            <Ico n="search" s={14} />
            <Ico n="caret" s={7} />
          </ToolboxSearch>
          <ToolboxBody>
            <ToolList>
              <GroupRow>
                <Ico n="triDown" s={9} />
                All Windows Forms
              </GroupRow>
              {tools.map(([name, icon]) => (
                <ToolRow key={name} $hot={name === 'Pointer' || name === 'Button'}>
                  <ToolIcon>{icon === 'label' ? <LabelMark>A</LabelMark> : <Ico n={icon} />}</ToolIcon>
                  {name}
                  {name === 'Button' && <CursorArrow />}
                </ToolRow>
              ))}
            </ToolList>
            <ScrollBar>
              <ScrollArrow><Ico n="triUp" s={10} /></ScrollArrow>
              <ScrollThumb />
              <ScrollArrow $bottom><Ico n="caret" s={10} /></ScrollArrow>
            </ScrollBar>
          </ToolboxBody>
        </ToolboxPanel>

        <Designer>
          <DocStrip>
            <Ico n="caret" s={9} />
            <Ico n="gear" s={11} />
          </DocStrip>
          <DocWell>
            <FormWindow>
              <FormTitle>
                <CaptionButton><Ico n="minimizeCap" s={14} /></CaptionButton>
                <CaptionButton><Ico n="maximizeCap" s={14} /></CaptionButton>
                <CaptionButton $close><Ico n="closeCap" s={14} /></CaptionButton>
              </FormTitle>
              <FormBody>
                <FormButton>button1</FormButton>
                {[78, 114, 150].map(x =>
                  [356, 368, 380]
                    .filter(y => y !== 368 || x !== 114)
                    .map(y => <Handle key={`${x}-${y}`} $x={x} $y={y} />)
                )}
              </FormBody>
            </FormWindow>
          </DocWell>
        </Designer>

        <SolutionPanel>
          <SolutionHead>
            Solution Explorer
            <HeadActions>
              <Ico n="caret" s={9} />
              <Ico n="pinDown" s={12} />
              <Ico n="close" s={12} />
            </HeadActions>
          </SolutionHead>
          <SolutionTools>
            <Tool $w={16} $ml={5}><Ico n="vsFile" /></Tool>
            <Sep $ml={7} />
            <Tool $w={16} $ml={5}><Ico n="clock" /></Tool>
            <Tool $w={6} $ml={5}><Ico n="caret" s={7} /></Tool>
            <Tool $w={16} $ml={5}><Ico n="swap" /></Tool>
            <Tool $w={14} $ml={6}><Ico n="collapse" s={14} /></Tool>
            <Tool $w={14} $ml={6}><Ico n="copyDoc" s={14} /></Tool>
            <Sep $ml={6} />
            <BoxedTool $w={22} $ml={4}><Ico n="hierarchy" s={14} /></BoxedTool>
            <Tool $w={6} $ml={2}><Ico n="caret" s={7} /></Tool>
            <Sep $ml={6} />
            <Tool $w={16} $ml={4}><Ico n="wrench" /></Tool>
            <BoxedTool $w={21} $ml={2}><Ico n="properties" s={14} /></BoxedTool>
          </SolutionTools>
          <SolutionSearch>
            Search Solution Explorer (Ctrl+;)
            <HeadActions>
              <Ico n="search" s={14} />
              <Ico n="caret" s={7} />
            </HeadActions>
          </SolutionSearch>
          <Tree>
            <TreeRow $pad={12}>
              <TreeIcon><Ico n="solution" s={15} /></TreeIcon>
              Solution 'New' (1 of 1 project)
            </TreeRow>
            <TreeRow $pad={4} $hot>
              <TreeArrow><Ico n="triDown" s={9} /></TreeArrow>
              <TreeIcon><Ico n="csProj" s={14} /></TreeIcon>
              New
            </TreeRow>
            <TreeRow $pad={21}>
              <TreeArrow><Ico n="triRight" s={10} /></TreeArrow>
              <TreeIcon><Ico n="deps" s={14} /></TreeIcon>
              Dependencies
            </TreeRow>
            <TreeRow $pad={21}>
              <TreeArrow><Ico n="triDown" s={9} /></TreeArrow>
              <TreeIcon><Ico n="formFile" s={14} /></TreeIcon>
              Form1.cs
            </TreeRow>
            <TreeRow $pad={38}>
              <TreeArrow><Ico n="triRight" s={10} /></TreeArrow>
              <TreeIcon><CsMark>C#</CsMark></TreeIcon>
              Form1.Designer.cs
            </TreeRow>
            <TreeRow $pad={63}>
              <TreeIcon><Ico n="resx" s={14} /></TreeIcon>
              Form1.resx
            </TreeRow>
            <TreeRow $pad={21}>
              <TreeArrow><Ico n="triRight" s={10} /></TreeArrow>
              <TreeIcon><CsMark>C#</CsMark></TreeIcon>
              Program.cs
            </TreeRow>
          </Tree>
          <BottomTabs>
            <BottomTab $on>Solution Explorer</BottomTab>
            <BottomTab>Git Changes</BottomTab>
          </BottomTabs>
        </SolutionPanel>
      </Workspace>

      <StatusBar>
        <Ico n="comment" s={16} />
        <StatusItem $ml={6}>Ready</StatusItem>
        <StatusRight>
          <StatusItem $ml={0}>
            <Ico n="upArrow" s={13} />
            Add to Source Control
          </StatusItem>
          <StatusItem $ml={19}>
            <Ico n="caret" s={7} />
          </StatusItem>
          <StatusItem $ml={10}>
            <Ico n="repo" s={12} />
            Select Repository
            <Ico n="triUp" s={8} />
          </StatusItem>
          <StatusItem $ml={22}>
            <Ico n="bell" s={14} />
          </StatusItem>
        </StatusRight>
      </StatusBar>

      <Taskbar>
        <Weather>
          <Sun />
          <WeatherText>
            <span>29°C</span>
            <span>Smoke</span>
          </WeatherText>
        </Weather>
        <TaskSlot><StartLogo /></TaskSlot>
        <TaskSearch>
          <svg width="18" height="18" viewBox="0 0 18 18" fill="none" stroke="#222" strokeWidth="2">
            <circle cx="10" cy="7" r="5" />
            <path d="M6.500 11L2.500 16" />
          </svg>
          Search
          <BullArt />
        </TaskSearch>
        <TaskSlot><TaskView /></TaskSlot>
        <TaskSlot><Meet /></TaskSlot>
        <TaskSlot $run="dot" $ml={3}><Explorer /></TaskSlot>
        <TaskSlot><Edge /></TaskSlot>
        <TaskSlot><Store /></TaskSlot>
        <TaskSlot $run="dot"><Chrome /></TaskSlot>
        <TaskSlot $run="dot"><VsLogo drop /></TaskSlot>
        <TaskSlot $run="active" $ml={3}><VsLogo /></TaskSlot>
        <Tray>
          <TrayPeek $ml={0} width="20" height="20" viewBox="0 0 20 20" fill="none" stroke="currentColor">
            <path d="M3 10a7 7 0 0 1 12-5l2-2v6h-6l2-2a5 5 0 0 0-8 3z" />
          </TrayPeek>
          <TrayPeek $ml={7} width="20" height="20" viewBox="0 0 20 20" fill="none" stroke="#2c6fb8">
            <path d="M10 2c4 0 6 3 6 8H4c0-5 2-8 6-8z" />
          </TrayPeek>
          <TrayPeek $ml={8} width="20" height="20" viewBox="0 0 20 20" fill="none" stroke="currentColor">
            <circle cx="10" cy="10" r="8" />
          </TrayPeek>
          <TrayPeek $ml={-3} width="20" height="20" viewBox="0 0 20 20" fill="none" stroke="currentColor">
            <path d="M4 7h3l5-4v14" />
          </TrayPeek>
          <TrayIcon $ml={13} width="14" height="9" viewBox="0 0 16 10" fill="none" stroke="#222">
            <rect x=".5" y=".5" width="13" height="9" rx="1.500" />
            <path d="M2 2h4v6H2z" fill="#222" />
            <path d="M14.500 3.500v3" />
          </TrayIcon>
          <Clock>
            <span>10:41 am</span>
            <span>29/08/2023</span>
          </Clock>
          <TrayIcon $ml={9} width="14" height="18" viewBox="0 0 14 18" fill="none" stroke="#333">
            <path d="M6 1c4 4 4 10-3 13 5 3 10 0 10-5S9 1 6 1z" />
          </TrayIcon>
        </Tray>
      </Taskbar>

      <Recorder>
        <RecSlot $w={12} $ml={2}><Ico n="deps" s={12} /></RecSlot>
        <RecSlot $w={20} $ml={2}><Camera /></RecSlot>
        <RecSlot $w={18} $ml={6}><RecDot /></RecSlot>
        <RecTime>00:20</RecTime>
        <RecSlot $w={14} $ml={6}><Mic /></RecSlot>
        <RecSlot $w={18} $ml={8}><Speaker /></RecSlot>
        <RecSlot $w={20} $ml={8}><Webcam /></RecSlot>
        <RecDivider />
        <RecSlot $w={22} $ml={4}><WindowsStack /></RecSlot>
        <RecSlot $w={21} $ml={5}><BigGear /></RecSlot>
      </Recorder>
      <Tooltip>Start Webcam recording</Tooltip>
    </Page>
  )
}

export default App
